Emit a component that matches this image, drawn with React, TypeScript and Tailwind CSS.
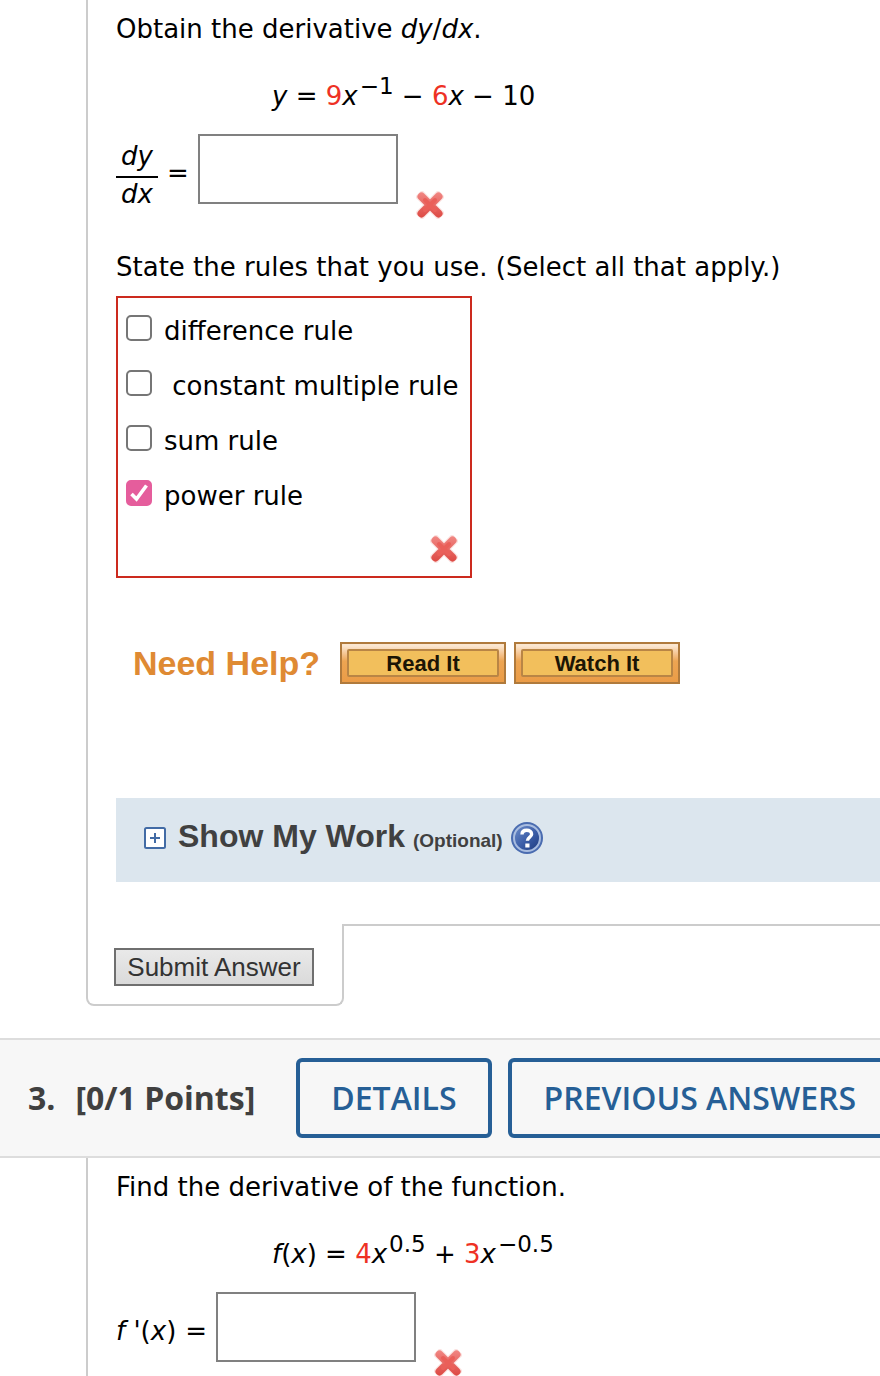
import React, { useState } from 'react';

const initialRules = [
  { id: 'difference', label: 'difference rule', checked: false },
  { id: 'constant', label: '\u00a0constant multiple rule', checked: false },
  { id: 'sum', label: 'sum rule', checked: false },
  { id: 'power', label: 'power rule', checked: true },
];

function WrongIcon() {
  return (
    <svg viewBox="0 0 28 28" className="size-7 shrink-0" role="img" aria-label="Incorrect">
      <defs>
        <linearGradient id="wrong" x1="0" y1="0" x2="0" y2="28" gradientUnits="userSpaceOnUse">
          <stop offset="0" stopColor="#f28a86" />
          <stop offset="1" stopColor="#dc4640" />
        </linearGradient>
      </defs>
      <path d="M6 6 22 22M22 6 6 22" stroke="#f8c6c3" strokeWidth="10" strokeLinecap="square" strokeLinejoin="round" opacity="0.5" />
      <path d="M5.5 5.5 22.5 22.5M22.5 5.5 5.5 22.5" stroke="url(#wrong)" strokeWidth="8" strokeLinecap="round" />
      <path d="M9 9 19 19M19 9 9 19" stroke="#ea5f59" strokeWidth="4" strokeLinecap="round" />
    </svg>
  );
}

function HelpIcon() {
  return (
    <svg viewBox="0 0 32 32" className="size-8" aria-hidden="true">
      <defs>
        <linearGradient id="help" x1="0" y1="0" x2="1" y2="1">
          <stop offset="0" stopColor="#6f8fcb" />
          <stop offset="0.55" stopColor="#3a5ca6" />
          <stop offset="1" stopColor="#1d3a7c" />
        </linearGradient>
      </defs>
      <circle cx="16" cy="16" r="16" fill="#4a6cb0" />
      <circle cx="16" cy="16" r="13" fill="url(#help)" stroke="#a9bde0" strokeWidth="2" />
      <path
        d="M11 12.5c0-2.7 2-4.2 4.8-4.2s4.8 1.5 4.8 3.9c0 3-4.2 3.2-4.2 6.6"
        fill="none"
        stroke="#fff"
        strokeWidth="3.4"
      />
      <rect x="14.3" y="21.5" width="4.2" height="4" fill="#fff" />
    </svg>
  );
}

function Red({ children }: { children: React.ReactNode }) {
  return <span className="text-[#ee3124]">{children}</span>;
}

function Sup({ children }: { children: React.ReactNode }) {
  return <sup className="ml-0.5 text-[23px]">{children}</sup>;
}

interface AnswerRowProps {
  name: string;
  children: React.ReactNode;
}

function AnswerRow({ name, children }: AnswerRowProps) {
  const [value, setValue] = useState('');

  return (
    <div className="mt-[22px] flex h-[85px] items-center gap-[9px]">
      <label htmlFor={name} className="flex items-center gap-[9px]">
        {children}
        <span className="pb-2">=</span>
      </label>
      <input
        id={name}
        type="text"
        value={value}
        onChange={e => setValue(e.target.value)}
        className="h-[70px] w-[200px] self-start border-2 border-[#808080] bg-white px-3 focus:outline-none"
      />
      <div className="ml-[9px] self-end">
        <WrongIcon />
      </div>
    </div>
  );
}

function HelpButton({ label }: { label: string }) {
  return (
    <button
      type="button"
      className="h-[42px] w-[166px] border-2 border-[#b07a3c] bg-linear-to-b from-[#fbe6cf] from-5% via-[#eda552] via-45% to-[#eb9c47] p-[5px]"
    >
      <span className="flex h-full items-center justify-center rounded-xs border-2 border-[#b98545] bg-[#f2bf5c] pt-0.5 text-[22px] font-bold text-[#1c1505]">
        {label}
      </span>
    </button>
  );
}

export default function App() {
  const [rules, setRules] = useState(initialRules);

  const toggleRule = (id: string) =>
    setRules(rules.map(r => (r.id === id ? { ...r, checked: !r.checked } : r)));

  return (
    <main className="overflow-hidden bg-white font-['DejaVu_Sans',Verdana,sans-serif] text-[26px] leading-8 text-black">
      {/* Question 2 */}
      <section className="ml-[86px]">
        <div className="border-l-2 border-[#ccc] pt-[13px] pb-[42px] pl-7">
          <p>
            Obtain the derivative <i>dy</i>/<i>dx</i>.
          </p>
          <p className="mt-[35px] pl-[156px]">
            <i>y</i> = <Red>9</Red><i>x</i><Sup>−1</Sup> − <Red>6</Red><i>x</i> − 10
          </p>
          <AnswerRow name="dydx">
            <span className="flex flex-col pb-1 text-center italic">
              <span className="border-b-2 border-black px-[5px] pb-1">dy</span>
              <span>dx</span>
            </span>
          </AnswerRow>

          <fieldset className="mt-8">
            <legend className="whitespace-nowrap">State the rules that you use. (Select all that apply.)</legend>
            <div className="mt-[13px] flex w-fit flex-col gap-[23px] border-2 border-[#cc2a1e] pt-[17px] pr-3 pb-[13px] pl-2">
              {rules.map(rule => (
                <label key={rule.id} className="flex items-start gap-3">
                  <span className="relative size-[26px] shrink-0">
                    <input
                      type="checkbox"
                      checked={rule.checked}
                      onChange={() => toggleRule(rule.id)}
                      className="block size-[26px] appearance-none rounded-[5px] border-2 border-[#767676] bg-white checked:border-[#e55d9c] checked:bg-[#e55d9c]"
                    />
                    {rule.checked && (
                      <svg viewBox="0 0 26 26" className="pointer-events-none absolute inset-0" aria-hidden="true">
                        <path d="M5.5 14 10.5 19 20.5 5.5" fill="none" stroke="#fff" strokeWidth="3.6" />
                      </svg>
                    )}
                  </span>
                  {rule.label}
                </label>
              ))}
              <div className="self-end">
                <WrongIcon />
              </div>
            </div>
          </fieldset>

          <div className="mt-16 flex items-center gap-2 pl-[17px] font-['Liberation_Sans',Arial,sans-serif]">
            <span className="mr-3 text-[34px] font-bold text-[#df8a33]">Need Help?</span>
            <HelpButton label="Read It" />
            <HelpButton label="Watch It" />
          </div>

          <div className="mt-[114px] flex h-[84px] items-center gap-2 bg-[#dce6ee] pb-1 pl-7 font-['Liberation_Sans',Arial,sans-serif] font-bold text-[#404040]">
            <button type="button" aria-label="Expand Show My Work" className="mr-1">
              <svg viewBox="0 0 22 22" className="size-[22px]" aria-hidden="true">
                <rect x="1" y="1" width="20" height="20" rx="1.5" fill="#fff" stroke="#426ba5" strokeWidth="2" />
                <path d="M11 6v10M6 11h10" stroke="#426ba5" strokeWidth="2" />
              </svg>
            </button>
            <h3 className="flex items-baseline gap-2 text-[32px]">
              Show My Work <span className="text-[19px]">(Optional)</span>
            </h3>
            <button type="button" aria-label="Help">
              <HelpIcon />
            </button>
          </div>
        </div>

        {/* Submit tab hanging below the question */}
        <div className="flex">
          <div className="w-[258px] shrink-0 rounded-b-lg border-2 border-t-0 border-[#ccc] pt-6 pb-[18px] pl-[26px]">
            <button
              type="button"
              className="h-[38px] w-[200px] border-2 border-[#6f6f6f] bg-linear-to-b from-[#e9e9e9] to-[#dadada] font-['Liberation_Sans',Arial,sans-serif] text-[26px] leading-8 text-[#333]"
            >
              Submit Answer
            </button>
          </div>
          <div className="-ml-0.5 flex-1 border-t-2 border-[#ccc]" />
        </div>
      </section>

      {/* Question 3 header */}
      <header className="mt-8 flex items-center gap-4 overflow-hidden border-y-2 border-[#ddd] bg-[#f7f7f7] py-[18px] pl-7 font-['Open_Sans',sans-serif] text-[32px]">
        <h2 className="mr-[25px] flex shrink-0 gap-5 font-bold text-[#404040]">
          <span>3.</span>
          <span>[0/1 Points]</span>
        </h2>
        <button
          type="button"
          className="h-20 shrink-0 rounded-md border-4 border-[#265f96] px-[31px] font-semibold text-[#265f96]"
        >
          DETAILS
        </button>
        <button
          type="button"
          className="h-20 shrink-0 rounded-md border-4 border-[#265f96] px-8 font-semibold text-[#265f96]"
        >
          PREVIOUS ANSWERS
        </button>
      </header>

      {/* Question 3 */}
      <section className="ml-[86px] border-l-2 border-[#ccc] pt-[13px] pl-7">
        <p>Find the derivative of the function.</p>
        <p className="mt-[35px] pl-[156px]">
          <i>f</i>(<i>x</i>) = <Red>4</Red><i>x</i><Sup>0.5</Sup> + <Red>3</Red><i>x</i><Sup>−0.5</Sup>
        </p>
        <AnswerRow name="fprime">
          <span className="pb-2">
            <i>f&nbsp;'</i>(<i>x</i>)
          </span>
        </AnswerRow>
      </section>
    </main>
  );
}
